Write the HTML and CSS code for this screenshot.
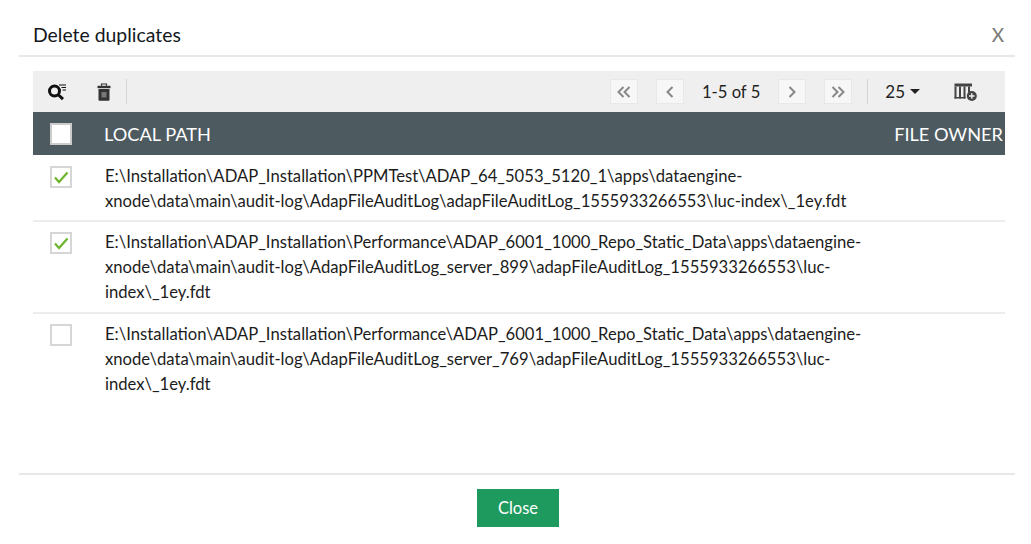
FILE: index.html
```html
<!DOCTYPE html>
<html lang="en">
<head>
<meta charset="utf-8">
<title>Delete duplicates</title>
<link rel="stylesheet" href="styles.css">
</head>
<body>
<div class="dialog">
  <header class="dialog-head">
    <h1 class="dialog-title">Delete duplicates</h1>
    <span class="dialog-close">X</span>
  </header>
  <section class="grid">
    <div class="toolbar">
      <div class="tools-left">
        <svg class="icon-search" viewBox="0 0 20 20" width="20" height="20"><circle cx="7.5" cy="9" r="5" fill="none" stroke="#111" stroke-width="3"/><path d="M11 12.500l5 4.700" stroke="#111" stroke-width="3" fill="none"/><path d="M12 3h7M14.500 5.500h4.500M15.500 8h3.500" stroke="#111" stroke-width="1.200" fill="none"/></svg>
        <svg class="icon-trash" viewBox="0 0 14 18" width="14" height="18"><path d="M0.500 2.800h13v2.400H0.500z" fill="#333"/><path d="M4.500 2.800V1h5v1.800" fill="none" stroke="#333" stroke-width="1.200"/><path d="M1.500 6h11v10.800a1 1 0 0 1-1 1h-9a1 1 0 0 1-1-1z" fill="#333"/><path d="M4.500 9h5v5.500h-5z" fill="#777"/></svg>
        <span class="tool-sep"></span>
      </div>
      <div class="tools-right">
        <span class="page-btn"><svg viewBox="0 0 16 12" width="16" height="12"><path d="M7.500 1L2.500 6l5 5M13.500 1L8.500 6l5 5" fill="none" stroke="#888" stroke-width="2"/></svg></span>
        <span class="page-btn gap-a"><svg viewBox="0 0 8 12" width="8" height="12"><path d="M6.500 1L1.500 6l5 5" fill="none" stroke="#888" stroke-width="2"/></svg></span>
        <span class="page-info">1-5 of 5</span>
        <span class="page-btn"><svg viewBox="0 0 8 12" width="8" height="12"><path d="M1.500 1l5 5-5 5" fill="none" stroke="#888" stroke-width="2"/></svg></span>
        <span class="page-btn gap-b"><svg viewBox="0 0 16 12" width="16" height="12"><path d="M2.500 1l5 5-5 5M8.500 1l5 5-5 5" fill="none" stroke="#888" stroke-width="2"/></svg></span>
        <span class="tool-sep sep-right"></span>
        <span class="page-size">25<i class="caret"></i></span>
        <svg class="icon-cols" viewBox="0 0 24 19" width="24" height="19"><path d="M0.500 0.500h17.500v3H0.500z" fill="#444"/><path d="M0.500 3.500h2v12h-2zM5 3.500h2v12H5zM9.500 3.500h2v12h-2zM14 3.500h2v6h-2z" fill="#444"/><path d="M0.500 14h11v1.500h-11z" fill="#444"/><circle cx="17.800" cy="13" r="5" fill="#444"/><path d="M15 13h5.600M17.800 10.200v5.600" stroke="#eee" stroke-width="1.400"/></svg>
      </div>
    </div>
    <div class="col-head">
      <span class="box box-head"></span>
      <span class="col-path">LOCAL PATH</span>
      <span class="col-owner">FILE OWNER</span>
    </div>
    <div class="row row-two">
      <span class="box"><svg viewBox="0 0 20 20" width="20" height="20"><path d="M4 10.500l4 4.500 8.500-9.500" fill="none" stroke="#6cb52d" stroke-width="2.200"/></svg></span>
      <p class="path">E:\Installation\ADAP_Installation\PPMTest\ADAP_64_5053_5120_1\apps\dataengine-<br>xnode\data\main\audit-log\AdapFileAuditLog\adapFileAuditLog_1555933266553\luc-index\_1ey.fdt</p>
    </div>
    <div class="row">
      <span class="box"><svg viewBox="0 0 20 20" width="20" height="20"><path d="M4 10.500l4 4.500 8.500-9.500" fill="none" stroke="#6cb52d" stroke-width="2.200"/></svg></span>
      <p class="path">E:\Installation\ADAP_Installation\Performance\ADAP_6001_1000_Repo_Static_Data\apps\dataengine-<br>xnode\data\main\audit-log\AdapFileAuditLog_server_899\adapFileAuditLog_1555933266553\luc-<br>index\_1ey.fdt</p>
    </div>
    <div class="row row-last">
      <span class="box"></span>
      <p class="path">E:\Installation\ADAP_Installation\Performance\ADAP_6001_1000_Repo_Static_Data\apps\dataengine-<br>xnode\data\main\audit-log\AdapFileAuditLog_server_769\adapFileAuditLog_1555933266553\luc-<br>index\_1ey.fdt</p>
    </div>
  </section>
  <footer class="dialog-foot">
    <button class="close-btn" type="button">Close</button>
  </footer>
</div>
</body>
</html>
```
FILE: styles.css
```css
* { box-sizing: border-box; }
html, body { margin: 0; padding: 0; background: #fff; }
body { font-family: Lato, "Open Sans", sans-serif; color: #222; width: 1031px; height: 544px; overflow: hidden; }
.dialog { margin: 0 16px 0 19px; height: 544px; display: flex; flex-direction: column; }
.dialog-head { height: 57px; border-bottom: 2px solid #e8e8e8; display: flex; justify-content: space-between; align-items: center; padding: 13px 11px 0 14px; flex: none; }
.dialog-title { margin: 0; font-size: 19.4px; font-weight: 400; color: #14181c; }
.dialog-close { font-size: 19px; color: #777; }
.grid { margin: 14px 10px 0 14px; height: 402px; flex: none; overflow: hidden; }
.toolbar { height: 41px; background: #efefef; display: flex; justify-content: space-between; align-items: center; }
.tools-left, .tools-right { display: flex; align-items: center; }
.tools-left { padding-left: 14px; }
.icon-search { margin-right: 30px; }
.tool-sep { width: 1px; height: 25px; background: #d4d4d4; margin-left: 15px; }
.tools-right { padding-right: 27px; }
.page-btn { width: 28px; height: 25px; background: #f7f7f7; border: 1px solid #e8e8e8; display: flex; align-items: center; justify-content: center; }
.gap-a { margin-left: 18px; }
.page-info { margin: 0 18px; font-size: 16.6px; color: #222; }
.gap-b { margin-left: 18px; }
.sep-right { margin: 0 17px 0 15px; }
.page-size { font-size: 17px; color: #222; display: flex; align-items: center; }
.caret { width: 0; height: 0; border-left: 5px solid transparent; border-right: 5px solid transparent; border-top: 5px solid #222; margin-left: 5px; }
.icon-cols { margin-left: 34px; margin-top: 2px; }
.col-head { height: 43px; background: #4d5a60; display: flex; align-items: center; padding-left: 17px; color: #fff; font-size: 18.2px; white-space: nowrap; }
.col-path { margin-left: 32px; flex: 1; }
.col-owner { margin-right: 2px; }
.box { width: 22px; height: 22px; flex: none; border: 2px solid #d6d6d6; background: #fff; display: block; }
.box svg { display: block; margin: -1px; }
.box-head { background: #fff; border-color: #ccc; }
.row { display: flex; align-items: flex-start; padding: 8px 0 8px 31px; border-bottom: 2px solid #ececec; margin-left: -14px; height: 92px; }
.row-two { height: 67px; padding-top: 9px; }
.row-last { border-bottom: 0; }
.row .box { margin-top: 2px; }
.path { margin: 0 0 0 33px; font-size: 16.65px; line-height: 25px; color: #1c1c1c; white-space: nowrap; }
.dialog-foot { border-top: 2px solid #e8e8e8; padding-top: 14px; display: flex; justify-content: center; }
.close-btn { width: 82px; height: 38px; margin-left: 2px; background: #1f9a5e; border: 0; color: #fff; font-family: inherit; font-size: 16.5px; padding: 0; }
```
